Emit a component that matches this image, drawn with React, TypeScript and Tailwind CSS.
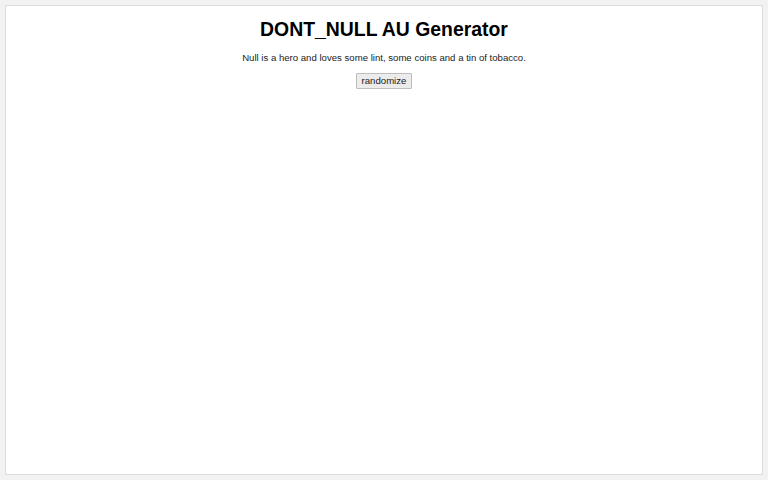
import { useState } from "react";

const things = ["some lint", "some coins", "a tin of tobacco"];

export default function App() {
  const [items] = useState(things);

  return (
    <div className="min-h-screen bg-[#f2f2f2] p-[5px] font-['Liberation_Sans',Arial,sans-serif]">
      <div className="h-[470px] bg-white border border-[#dcdcdc] flex flex-col items-center">
        <h1 className="mt-[11px] text-[19.4px] leading-[24px] font-bold text-black">
          DONT_NULL AU Generator
        </h1>
        <p className="mt-[11px] text-[9.6px] leading-[12px] text-[#222]">
          Null is a hero and loves {items[0]}, {items[1]} and {items[2]}.
        </p>
        <button className="mt-[9px] h-[16px] px-[5px] text-[9.6px] leading-[12px] text-[#222] bg-[#ececec] border border-[#bdbdbd] rounded-[1px]">
          randomize
        </button>
      </div>
    </div>
  );
}
